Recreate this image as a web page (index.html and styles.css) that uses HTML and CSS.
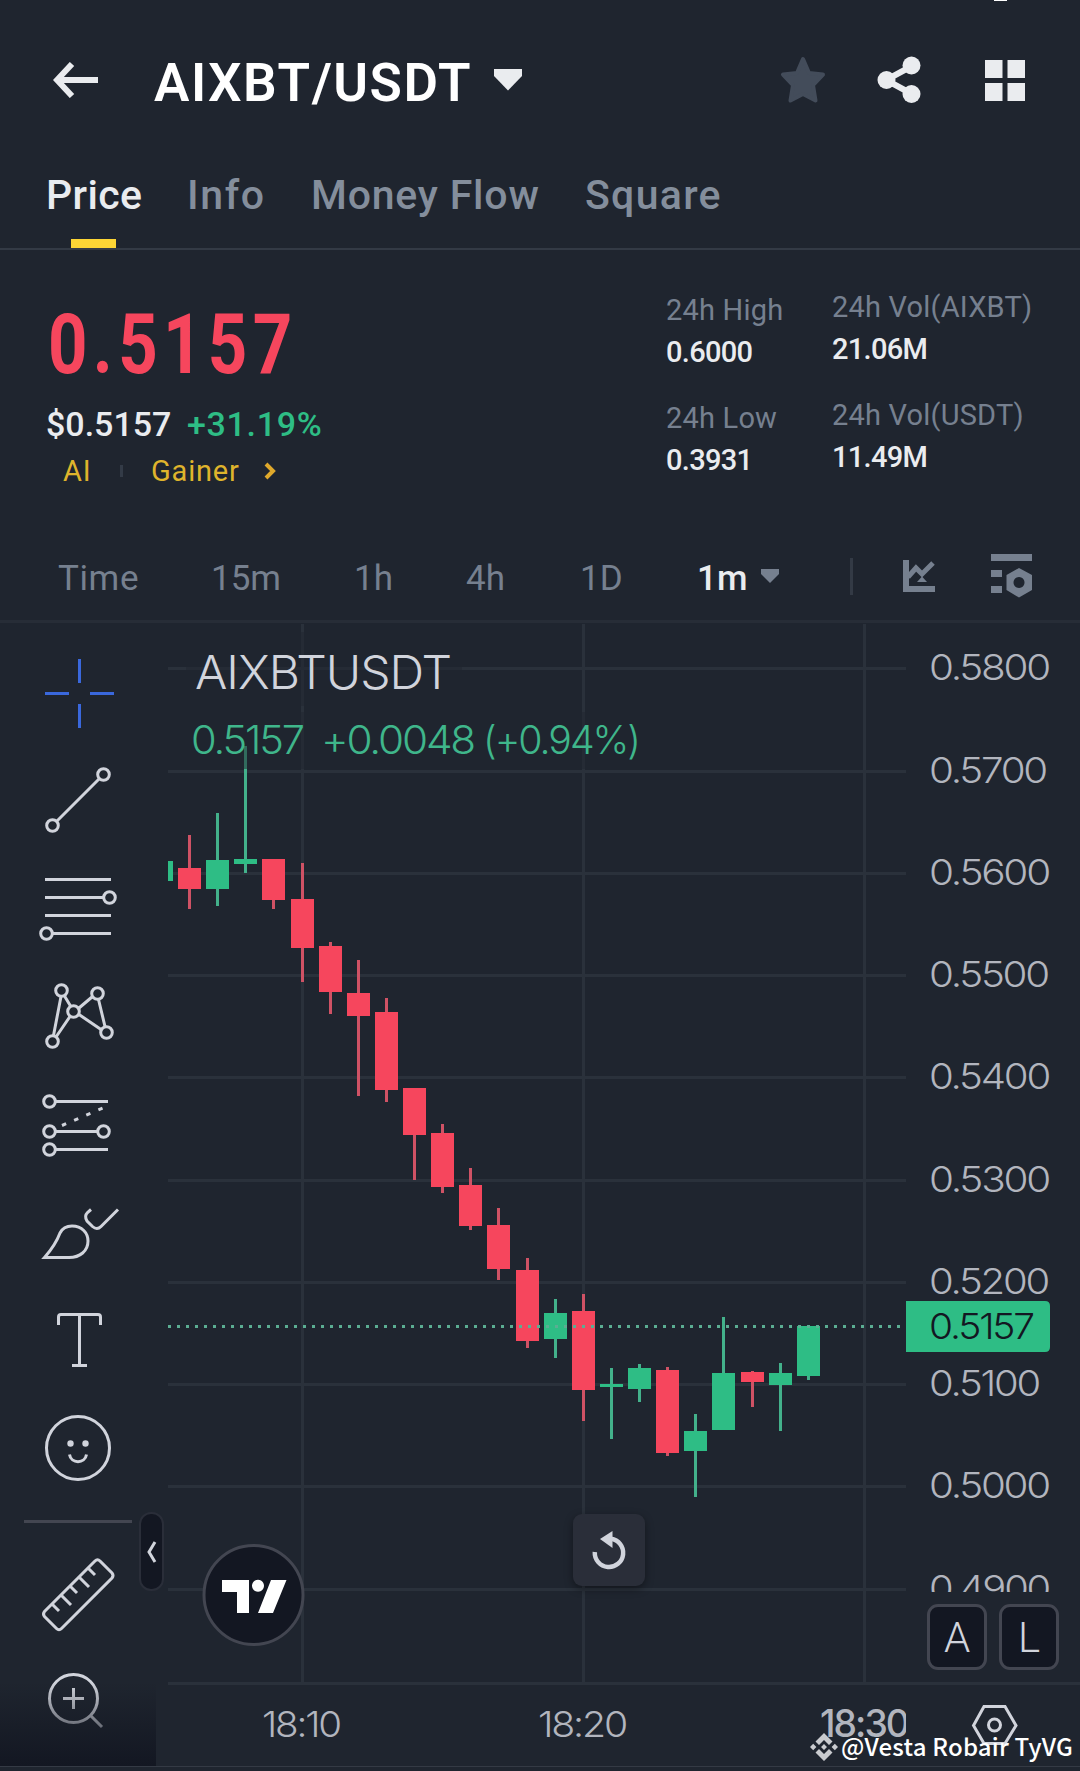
FILE: index.html
```html
<!DOCTYPE html>
<html lang="en">
<head>
  <meta charset="UTF-8">
  <meta name="viewport" content="width=device-width, initial-scale=1.0">
  <title>AIXBT/USDT</title>
  <link rel="stylesheet" href="styles.css">
</head>
<body>
  <div class="notch"></div>

  <header class="header">
    <svg class="back" width="46" height="36" viewBox="0 0 46 36"><path d="M19 2 L4 18 L19 34 M4 18 H45" /></svg>
    <h1>AIXBT/USDT</h1>
    <svg class="caret" width="28" height="22" viewBox="0 0 28 22"><path d="M0 0 H28 V7 L14 21.5 L0 7 Z" /></svg>
    <div class="header-icons">
      <svg width="46" height="48" viewBox="0 0 46 48"><path class="star" d="M23 3 L29 17 L43 18.500 L33 29 L35.500 44.500 L23 38 L10.500 44.500 L13 29 L3 18.500 L17 17 Z" /></svg>
      <svg class="share" width="44" height="48" viewBox="0 0 44 48">
        <path d="M35 10 L9 24 L35 38" />
        <circle cx="34.500" cy="9.500" r="9" /><circle cx="9.500" cy="24" r="9" /><circle cx="34.500" cy="38" r="9" />
      </svg>
      <svg class="tiles" width="40" height="41" viewBox="0 0 40 41"><path d="M0 0h17.500v18h-17.500z M22.500 0h17.500v18h-17.500z M0 23h17.500v18h-17.500z M22.500 23h17.500v18h-17.500z" /></svg>
    </div>
  </header>

  <nav class="tabs">
    <a class="tab active">Price</a>
    <a class="tab info">Info</a>
    <a class="tab flow">Money Flow</a>
    <a class="tab square">Square</a>
  </nav>

  <section class="ticker">
    <div class="quote">
      <div class="price">0.5157</div>
      <div class="change"><span class="usd">$0.5157</span><span class="pct">+31.19%</span></div>
      <div class="tags">
        <span>AI</span><i></i><span class="gainer">Gainer</span>
        <svg width="12" height="18" viewBox="0 0 12 18"><path d="M2 2 L9 9 L2 16" /></svg>
      </div>
    </div>
    <div class="stats stats-range">
      <div class="label">24h High</div>
      <div class="value">0.6000</div>
      <div class="label">24h Low</div>
      <div class="value">0.3931</div>
    </div>
    <div class="stats stats-volume">
      <div class="label">24h Vol(AIXBT)</div>
      <div class="value">21.06M</div>
      <div class="label">24h Vol(USDT)</div>
      <div class="value">11.49M</div>
    </div>
  </section>

  <div class="intervals">
    <span class="time">Time</span>
    <span class="m15">15m</span>
    <span class="h1">1h</span>
    <span class="h4">4h</span>
    <span class="d1">1D</span>
    <span class="m1">1m</span>
    <svg class="down" width="18" height="14" viewBox="0 0 18 14"><path d="M0 0 H18 V5 L9 14 L0 5 Z" /></svg>
    <i class="bar"></i>
    <svg class="indicator" width="32" height="33" viewBox="0 0 32 33">
      <path d="M0 0 H6 V26 H32 V32 H0 Z M14 22 L19 16.500 L24 22 Z" />
      <path class="zig" d="M5 17 L13 8 L19 14 L30 3" />
    </svg>
    <svg class="settings" width="41" height="44" viewBox="0 0 41 44">
      <path d="M0 0 H41 V7 H0 Z M0 16 H11 V23 H0 Z M0 32 H11 V39 H0 Z" />
      <path fill-rule="evenodd" d="M28 14 L41 21 V36 L28 43.500 L15.500 36 V21 Z M28 23 a5.500 5.500 0 1 0 0.010 0 Z" />
    </svg>
  </div>

  <main class="chart">
    <aside class="toolbar">
      <svg class="blue" width="168" height="122" viewBox="0 624 168 122"><path d="M79.500 659V683M79.500 704V728M45 693.500H69M90 693.500H114" /></svg>
      <svg width="168" height="108" viewBox="0 746 168 108"><path d="M57 821L99 779" /><circle cx="103.500" cy="774.500" r="5.800" /><circle cx="52.500" cy="825.500" r="5.800" /></svg>
      <svg width="168" height="108" viewBox="0 854 168 108"><path d="M45 879.500H111M45 897.500H103M45 915.500H111M53 933.500H111" /><circle cx="109.500" cy="897.500" r="5.800" /><circle cx="46.500" cy="933.500" r="5.800" /></svg>
      <svg width="168" height="108" viewBox="0 962 168 108">
        <path d="M53.500 1035.500L61 996.500M64.500 996L70.500 1006M79 1008L92 997M98.500 999.500L105 1026.500M101 1029.500L79 1014.500M56 1037L70 1016.500" />
        <circle cx="61.500" cy="990.500" r="5.800" /><circle cx="97.500" cy="993.500" r="5.800" /><circle cx="73.500" cy="1011.500" r="5.800" /><circle cx="106.500" cy="1032.500" r="5.800" /><circle cx="52.500" cy="1041.500" r="5.800" />
      </svg>
      <svg width="168" height="110" viewBox="0 1070 168 110">
        <path d="M56 1101.500H108M56 1131.500H97M56 1149.500H108" />
        <path stroke-dasharray="4.500 8.700" d="M62 1125.500L104 1107.500" />
        <circle cx="49.500" cy="1101.500" r="5.800" /><circle cx="49.500" cy="1131.500" r="5.800" /><circle cx="103.500" cy="1131.500" r="5.800" /><circle cx="49.500" cy="1149.500" r="5.800" />
      </svg>
      <svg width="168" height="106" viewBox="0 1180 168 106">
        <path d="M91 1209.500L87.500 1212.500Q84 1216 87 1221L92.500 1226.500Q97 1230.500 101 1226.500L118 1209.500" />
        <path d="M44.500 1257.500C52 1249 57 1241 60 1233C62.500 1228 67 1226 72 1226C82 1226 88 1233 88 1241C88 1251 80 1257.500 69 1257.500Z" />
      </svg>
      <svg width="168" height="108" viewBox="0 1286 168 108"><path d="M58.500 1325V1317Q58.500 1314.500 61 1314.500H98Q100.500 1314.500 100.500 1317V1325M79.500 1314.500V1365.500M72 1365.500H87" /></svg>
      <svg width="168" height="110" viewBox="0 1394 168 110"><circle cx="78" cy="1448" r="31.500" /><circle class="dot" cx="70.500" cy="1443.500" r="3.200" /><circle class="dot" cx="85.500" cy="1443.500" r="3.200" /><path d="M69.500 1454.500C71 1464 85 1464 86.500 1454.500" /></svg>
      <hr>
      <svg width="168" height="117" viewBox="0 1533 168 117">
        <path d="M95 1561Q97.500 1558.500 100 1561L112 1573Q114 1575.500 112 1578L61.500 1628.500Q59 1631 56.500 1628.500L44.500 1616.500Q42.500 1614 44.500 1611.500Z" />
        <path d="M88 1568L95 1575M79 1577L89 1587M70 1586L77 1593M61 1595L71 1605M52 1604L59 1611" />
      </svg>
      <svg width="168" height="116" viewBox="0 1650 168 116"><circle cx="73.500" cy="1698.500" r="24" /><path d="M63 1698.500H84M73.500 1688V1709M91 1716L102 1727" /></svg>
      <div class="fade"></div>
      <button class="collapse"><svg width="10" height="22" viewBox="0 0 10 22"><path d="M8 1L2 11L8 21" /></svg></button>
    </aside>

    <svg class="plot" width="912" height="1142" viewBox="168 624 912 1142">
      <clipPath id="axis-clip"><rect x="906" y="624" width="174" height="968" /></clipPath>
      <clipPath id="time-clip"><rect x="168" y="1684" width="738" height="82" /></clipPath>
      <g class="grid">
        <path d="M168 668.500H906M168 771.500H906M168 873.500H906M168 975.500H906M168 1077.500H906M168 1180.500H906M168 1282.500H906M168 1384.500H906M168 1486.500H906M168 1589.500H906" />
        <path d="M302.500 624V1683M583.500 624V1683M864.500 624V1683" />
        <path d="M168 1683.500H1080" />
      </g>
      <g id="candles"></g>
      <path class="last" d="M168 1326.500H906" />

      <rect class="veil" x="186" y="632" width="276" height="74" />
      <rect class="veil" x="186" y="712" width="460" height="57" />
      <text class="symbol" x="195" y="689" textLength="256" lengthAdjust="spacingAndGlyphs">AIXBTUSDT</text>
      <text class="delta" x="191" y="754" textLength="112" lengthAdjust="spacingAndGlyphs">0.5157</text>
      <text class="delta" x="321" y="754" textLength="153" lengthAdjust="spacingAndGlyphs">+0.0048</text>
      <text class="delta" x="483" y="754" textLength="156" lengthAdjust="spacingAndGlyphs">(+0.94%)</text>

      <g class="axis" clip-path="url(#axis-clip)">
        <text x="929" y="680" textLength="120" lengthAdjust="spacingAndGlyphs">0.5800</text>
        <text x="929" y="783" textLength="117" lengthAdjust="spacingAndGlyphs">0.5700</text>
        <text x="929" y="885" textLength="120" lengthAdjust="spacingAndGlyphs">0.5600</text>
        <text x="929" y="987" textLength="119" lengthAdjust="spacingAndGlyphs">0.5500</text>
        <text x="929" y="1089" textLength="120" lengthAdjust="spacingAndGlyphs">0.5400</text>
        <text x="929" y="1192" textLength="120" lengthAdjust="spacingAndGlyphs">0.5300</text>
        <text x="929" y="1294" textLength="119" lengthAdjust="spacingAndGlyphs">0.5200</text>
        <text x="929" y="1396" textLength="110" lengthAdjust="spacingAndGlyphs">0.5100</text>
        <text x="929" y="1498" textLength="120" lengthAdjust="spacingAndGlyphs">0.5000</text>
        <text x="929" y="1601" textLength="120" lengthAdjust="spacingAndGlyphs">0.4900</text>
      </g>
      <path class="tag" d="M906 1301H1045Q1050 1301 1050 1306V1347Q1050 1352 1045 1352H906Z" />
      <text class="tag-text" x="929" y="1339" textLength="104" lengthAdjust="spacingAndGlyphs">0.5157</text>

      <g class="axis" clip-path="url(#time-clip)">
        <text x="262" y="1737" textLength="78" lengthAdjust="spacingAndGlyphs">18:10</text>
        <text x="538" y="1737" textLength="88" lengthAdjust="spacingAndGlyphs">18:20</text>
        <text class="strong" x="820" y="1737" textLength="88" lengthAdjust="spacingAndGlyphs">18:30</text>
      </g>
      <g class="gear">
        <path d="M984 1706.500H1005L1016 1725.500L1005 1743.500H984L973.500 1725.500Z" /><circle cx="994.500" cy="1725" r="6" />
      </g>
      <g class="logo">
        <circle cx="253.500" cy="1595" r="49.500" />
        <path d="M222 1580H249V1613H237V1592H222Z M271 1580H286.500L273 1613H258Z M258 1579.800a6 6 0 1 0 0.010 0Z" />
      </g>
    </svg>

    <button class="reset"><svg width="36" height="42" viewBox="591 1529 36 42"><path class="arc" d="M594.800 1552A14.200 14.200 0 1 0 611 1538.800" /><path class="head" d="M600 1539L612.500 1531V1548Z" /></svg></button>
    <div class="modes"><button>A</button><button>L</button></div>
  </main>

  <div class="credit">
    <svg width="28" height="28" viewBox="0 0 28 28">
      <path d="M14 0L22.500 8.500L19 12L14 7L9 12L5.500 8.500ZM14 28L5.500 19.500L9 16L14 21L19 16L22.500 19.500ZM14 11L17 14L14 17L11 14ZM3.200 10.800L6.400 14L3.200 17.200L0 14ZM24.800 10.800L28 14L24.800 17.200L21.600 14Z" />
    </svg>
    <span>@Vesta Robair TyVG</span>
  </div>

  <script>
    // x, wick top, body top, body bottom, wick bottom, direction
    var candles = [
      [161.5, 861, 861, 881, 881, 'up'],
      [189.5, 835, 868, 889, 909, 'down'],
      [217.5, 813, 860, 889, 906, 'up'],
      [245.5, 746, 859, 864, 873, 'up'],
      [273.5, 859, 859, 900, 909, 'down'],
      [302.5, 863, 899, 948, 982, 'down'],
      [330.5, 942, 946, 992, 1014, 'down'],
      [358.5, 960, 993, 1016, 1096, 'down'],
      [386.5, 998, 1012, 1090, 1102, 'down'],
      [414.5, 1088, 1088, 1135, 1180, 'down'],
      [442.5, 1124, 1133, 1187, 1193, 'down'],
      [470.5, 1168, 1185, 1226, 1230, 'down'],
      [498.5, 1208, 1225, 1269, 1280, 'down'],
      [527.5, 1258, 1270, 1341, 1348, 'down'],
      [555.5, 1299, 1313, 1339, 1358, 'up'],
      [583.5, 1294, 1311, 1390, 1421, 'down'],
      [611.5, 1368, 1384, 1387, 1439, 'up'],
      [639.5, 1364, 1368, 1389, 1402, 'up'],
      [667.5, 1367, 1370, 1453, 1456, 'down'],
      [695.5, 1414, 1431, 1451, 1497, 'up'],
      [723.5, 1317, 1373, 1430, 1430, 'up'],
      [752.5, 1371, 1372, 1382, 1407, 'down'],
      [780.5, 1363, 1373, 1385, 1431, 'up'],
      [808.5, 1326, 1326, 1376, 1380, 'up']
    ];

    var html = '';
    candles.forEach(function (c) {
      html += '<rect class="wick ' + c[5] + '" x="' + (c[0] - 1.5) + '" y="' + c[1] + '" width="3" height="' + (c[4] - c[1]) + '"/>';
      html += '<rect class="' + c[5] + '" x="' + (c[0] - 11.5) + '" y="' + c[2] + '" width="23" height="' + (c[3] - c[2]) + '"/>';
    });
    document.getElementById('candles').innerHTML = html;
  </script>
</body>
</html>
```
FILE: styles.css
```css
* {
  box-sizing: border-box;
}

body {
  margin: 0;
  width: 1080px;
  height: 1771px;
  overflow: hidden;
  position: relative;
  background-color: #1f252f;
  color: #eaecef;
  font-family: Roboto, "Liberation Sans", sans-serif;
}

svg {
  display: block;
  flex: none;
}

button {
  padding: 0;
  font-family: inherit;
}

.notch {
  position: absolute;
  top: 0;
  left: 994px;
  width: 13px;
  height: 1px;
  background-color: #fff;
}

/* Header */
.header {
  display: flex;
  align-items: center;
  height: 164px;
  padding: 0 55px 4px 53px;
}

.back {
  fill: none;
  stroke: #eaecef;
  stroke-width: 6;
}

h1 {
  margin: 5px 0 0 55px;
  width: 318px;
  font-size: 53px;
  font-weight: 600;
  letter-spacing: 1.5px;
  color: #fff;
  white-space: nowrap;
}

.caret {
  margin-left: 22px;
  fill: #eaecef;
}

.header-icons {
  display: flex;
  align-items: center;
  margin-left: auto;
}

.star {
  fill: #434c5a;
  stroke: #434c5a;
  stroke-width: 4;
  stroke-linejoin: round;
}

.share {
  margin-left: 51px;
  fill: #eaecef;
}

.share path {
  fill: none;
  stroke: #eaecef;
  stroke-width: 6;
}

.tiles {
  margin-left: 64px;
  fill: #eaecef;
}

/* Tabs */
.tabs {
  display: flex;
  height: 86px;
  padding-left: 46px;
  border-bottom: 2px solid #333a45;
  font-size: 41px;
  font-weight: 500;
  line-height: 62px;
  color: #848e9c;
  white-space: nowrap;
}

.tab {
  width: 141px;
  letter-spacing: 0.4px;
}

.tab.info {
  width: 124px;
  letter-spacing: 1.6px;
}

.tab.flow {
  width: 274px;
  letter-spacing: 0.8px;
}

.tab.square {
  letter-spacing: 1.3px;
}

.tab.active {
  color: #eaecef;
}

.tab.active::after {
  content: "";
  display: block;
  width: 45px;
  height: 9px;
  margin: 13px 0 0 25px;
  background-color: #fcd535;
}

/* Ticker */
.ticker {
  display: flex;
  height: 282px;
  padding: 0 46px;
}

.quote {
  width: 620px;
  padding-top: 45px;
}

.price {
  margin-left: 2px;
  font-size: 84px;
  font-weight: 700;
  line-height: 100px;
  letter-spacing: 6.5px;
  color: #f6465d;
  transform: scaleX(0.82);
  transform-origin: left;
}

.change {
  display: flex;
  font-size: 34px;
  font-weight: 500;
  line-height: 40px;
  margin-top: 9px;
}

.usd {
  width: 141px;
}

.pct {
  color: #2ebd85;
  letter-spacing: 0.7px;
}

.tags {
  display: flex;
  align-items: center;
  font-size: 29px;
  line-height: 40px;
  margin-top: 7px;
  padding-left: 17px;
  color: #dfb42c;
}

.tags span {
  width: 57px;
  letter-spacing: 0.8px;
}

.tags i {
  width: 3px;
  height: 12px;
  background-color: #333b47;
}

.tags .gainer {
  width: 113px;
  margin-left: 28px;
}

.tags svg {
  fill: none;
  stroke: #dfa92c;
  stroke-width: 4;
}

.stats {
  width: 166px;
  padding-top: 40px;
  font-size: 29px;
  white-space: nowrap;
}

.stats-volume {
  padding-top: 37px;
}

.label {
  height: 42px;
  line-height: 40px;
  letter-spacing: 0.2px;
  color: #76808f;
}

.value {
  height: 66px;
  line-height: 40px;
  font-weight: 500;
  letter-spacing: -0.7px;
}

/* Intervals */
.intervals {
  display: flex;
  align-items: center;
  height: 91px;
  padding: 0 48px 0 58px;
  border-bottom: 3px solid #272d37;
  font-size: 35px;
  color: #76808f;
}

.intervals span {
  padding-top: 5px;
}

.time {
  width: 153px;
  letter-spacing: 0.6px;
}

.m15 {
  width: 143px;
}

.h1 {
  width: 112px;
}

.h4 {
  width: 114px;
}

.d1 {
  width: 117px;
}

.m1 {
  width: 64px;
  font-weight: 500;
  color: #eaecef;
}

.intervals svg {
  fill: #76808f;
}

.bar {
  width: 3px;
  height: 37px;
  margin: 0 50px 0 71px;
  background-color: #333a45;
}

.indicator .zig {
  fill: none;
  stroke: #76808f;
  stroke-width: 5;
}

.settings {
  margin-left: 56px;
}

/* Chart */
.chart {
  display: flex;
  position: relative;
  height: 1143px;
  margin-top: 1px;
  border-bottom: 1px solid #343a44;
}

.toolbar {
  position: relative;
  width: 168px;
}

.toolbar svg {
  fill: none;
  stroke: #d1d4dc;
  stroke-width: 3;
}

.toolbar .blue {
  stroke: #3a68dc;
}

.toolbar .dot {
  fill: #d1d4dc;
  stroke: none;
}

.toolbar hr {
  width: 108px;
  height: 3px;
  margin: 16px 0 10px 24px;
  border: none;
  background-color: #434651;
}

.fade {
  position: absolute;
  left: 0;
  bottom: 0;
  width: 156px;
  height: 84px;
  background: linear-gradient(rgba(19, 23, 34, 0), #131722);
}

.collapse {
  position: absolute;
  left: 139px;
  top: 888px;
  width: 25px;
  height: 79px;
  display: flex;
  align-items: center;
  justify-content: center;
  border: 2px solid #2a2e39;
  border-radius: 12px;
  background-color: #131722;
}

.grid path {
  stroke: #2a313b;
  stroke-width: 3;
}

.up {
  fill: #2ebd85;
}

.down {
  fill: #f6465d;
}

.wick.up {
  fill: #43b18b;
}

.wick.down {
  fill: #cf5265;
}

.last {
  stroke: #5bae93;
  stroke-width: 3;
  stroke-dasharray: 3 6;
}

.veil {
  fill: #1f252f;
  opacity: 0.5;
}

.plot text {
  font-family: Inter, "Liberation Sans", sans-serif;
  font-weight: 300;
  letter-spacing: -2px;
}

.plot .symbol {
  font-size: 47px;
  letter-spacing: -1px;
  fill: #d1d4dc;
}

.delta {
  font-size: 39px;
  fill: #3fb68b;
}

.axis {
  font-size: 36px;
  fill: #b2b5be;
}

.plot .strong {
  font-size: 38px;
  font-weight: 500;
}

.tag {
  fill: #2ebd85;
}

.tag-text {
  font-size: 36px;
  fill: #131722;
}

.gear {
  fill: none;
  stroke: #d1d4dc;
  stroke-width: 3;
}

.logo circle {
  fill: #131722;
  stroke: #434651;
  stroke-width: 3;
}

.logo path {
  fill: #fff;
}

.reset {
  position: absolute;
  left: 573px;
  top: 890px;
  width: 72px;
  height: 72px;
  display: flex;
  align-items: center;
  justify-content: center;
  border: none;
  border-radius: 9px;
  background-color: #2a2e39;
  box-shadow: 0 3px 8px rgba(0, 0, 0, 0.4);
}

.reset .arc {
  fill: none;
  stroke: #d1d4dc;
  stroke-width: 4.5;
}

.reset .head {
  fill: #d1d4dc;
}

.modes {
  position: absolute;
  left: 927px;
  top: 980px;
  display: flex;
  gap: 12px;
}

.modes button {
  width: 60px;
  height: 66px;
  border: 3px solid #434651;
  border-radius: 11px;
  background-color: #131722;
  color: #d1d4dc;
  font-size: 42px;
  font-weight: 300;
}

/* Author mark in the corner */
.credit {
  position: absolute;
  left: 810px;
  top: 1730px;
  display: flex;
  align-items: center;
  gap: 3px;
  font-family: "Noto Sans CJK SC", sans-serif;
  font-size: 24px;
  font-weight: 500;
  line-height: 32px;
  letter-spacing: 0.2px;
  color: #fff;
  white-space: nowrap;
}

.credit svg {
  margin-top: 2px;
  fill: #c9cbcf;
}
```
